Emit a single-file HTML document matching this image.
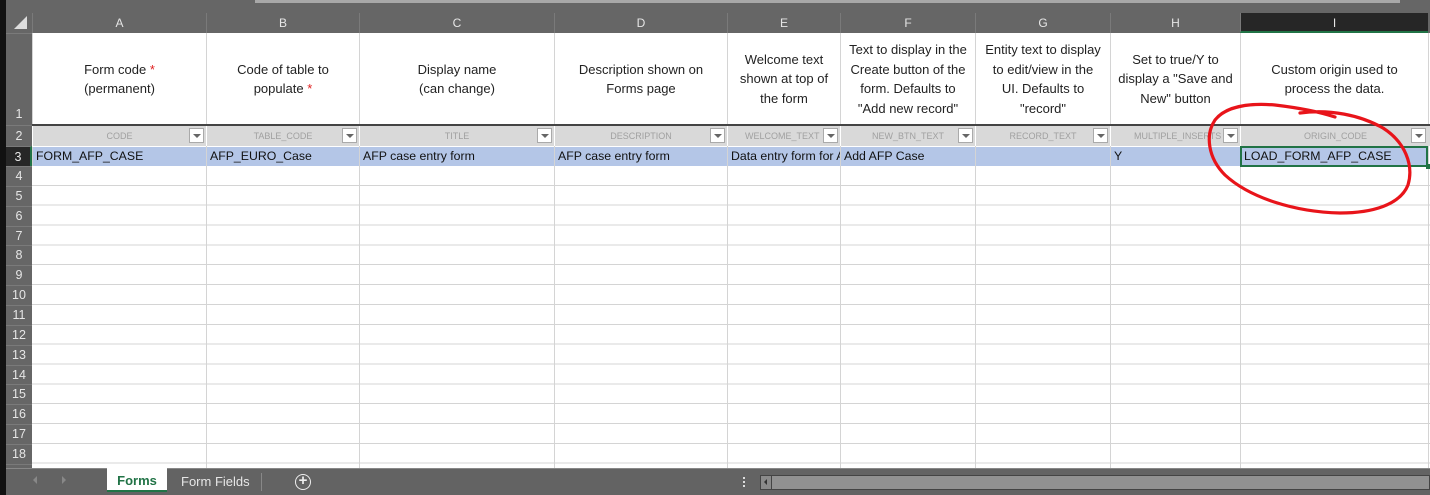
<!DOCTYPE html>
<html><head><meta charset="utf-8"><style>
*{margin:0;padding:0;box-sizing:border-box}
body{width:1430px;height:495px;overflow:hidden;background:#fff;position:relative;font-family:"Liberation Sans",Calibri,sans-serif}
.a{position:absolute}
.ch{position:absolute;top:13px;height:20px;color:#e6e6e6;font-size:12px;text-align:center;line-height:20px;border-left:1px solid #7a7a7a}
.h1{position:absolute;top:33px;height:92px;display:flex;align-items:center;justify-content:center;text-align:center;font-size:13px;line-height:19.5px;color:#222;border-left:1px solid #d4d4d4}
.h2{position:absolute;top:126px;height:20px;background:#d9d9d9;color:#a0a0a0;font-size:9px;line-height:20px;text-align:center;border-left:1px solid #fff}
.dd{position:absolute;top:2px;right:2px;width:15px;height:15px;background:#fff;border:1px solid #aaa}
.dd:after{content:"";position:absolute;left:3px;top:5px;border-left:4px solid transparent;border-right:4px solid transparent;border-top:4px solid #666}
.r3{position:absolute;top:147px;height:19px;background:#b4c6e7;font-size:12.3px;line-height:19px;padding-left:3px;white-space:nowrap;overflow:hidden;color:#111;border-left:1px solid #d4d4d4}
.rn{position:absolute;left:6px;width:26px;color:#e6e6e6;font-size:12.5px;text-align:center;border-top:1px solid #7a7a7a}
.vl{position:absolute;top:33px;height:435px;width:1px;background:#d4d4d4}
.red{color:#e02020}
</style></head><body>
<div class="a" style="left:0;top:0;width:6px;height:495px;background:#111"></div>
<div class="a" style="left:6px;top:0;width:1424px;height:33px;background:#666"></div>
<div class="a" style="left:255px;top:0;width:1145px;height:3px;background:#a8a8a8"></div>
<div class="a" style="left:6px;top:33px;width:26px;height:435px;background:#666"></div>
<div class="a" style="left:14px;top:16px;width:0;height:0;border-left:13px solid transparent;border-bottom:13px solid #ddd"></div>
<div class="ch" style="left:32px;width:174px">A</div>
<div class="ch" style="left:206px;width:153px">B</div>
<div class="ch" style="left:359px;width:195px">C</div>
<div class="ch" style="left:554px;width:173px">D</div>
<div class="ch" style="left:727px;width:113px">E</div>
<div class="ch" style="left:840px;width:135px">F</div>
<div class="ch" style="left:975px;width:135px">G</div>
<div class="ch" style="left:1110px;width:130px">H</div>
<div class="ch" style="left:1240px;width:188px;background:#262626;border-bottom:2px solid #217346">I</div>
<div class="a" style="left:32px;top:166px;width:1398px;height:300px;background:repeating-linear-gradient(to bottom,transparent 0,transparent 18.85px,#d4d4d4 18.85px,#d4d4d4 19.85px)"></div>
<div class="vl" style="left:206px"></div><div class="vl" style="left:359px"></div><div class="vl" style="left:554px"></div><div class="vl" style="left:727px"></div><div class="vl" style="left:840px"></div><div class="vl" style="left:975px"></div><div class="vl" style="left:1110px"></div><div class="vl" style="left:1240px"></div><div class="vl" style="left:1428px"></div>
<div class="h1" style="left:32px;width:174px"><div>Form code <span class="red">*</span><br>(permanent)</div></div>
<div class="h1" style="left:206px;width:153px"><div>Code of table to<br>populate <span class="red">*</span></div></div>
<div class="h1" style="left:359px;width:195px"><div>Display name<br>(can change)</div></div>
<div class="h1" style="left:554px;width:173px"><div>Description shown on<br>Forms page</div></div>
<div class="h1" style="left:727px;width:113px"><div>Welcome text<br>shown at top of<br>the form</div></div>
<div class="h1" style="left:840px;width:135px"><div>Text to display in the<br>Create button of the<br>form. Defaults to<br>"Add new record"</div></div>
<div class="h1" style="left:975px;width:135px"><div>Entity text to display<br>to edit/view in the<br>UI. Defaults to<br>"record"</div></div>
<div class="h1" style="left:1110px;width:130px"><div>Set to true/Y to<br>display a "Save and<br>New" button</div></div>
<div class="h1" style="left:1240px;width:188px"><div>Custom origin used to<br>process the data.</div></div>
<div class="a" style="left:32px;top:124px;width:1398px;height:2px;background:#444"></div>
<div class="h2" style="left:32px;width:174px">CODE<div class="dd"></div></div>
<div class="h2" style="left:206px;width:153px">TABLE_CODE<div class="dd"></div></div>
<div class="h2" style="left:359px;width:195px">TITLE<div class="dd"></div></div>
<div class="h2" style="left:554px;width:173px">DESCRIPTION<div class="dd"></div></div>
<div class="h2" style="left:727px;width:113px;text-align:left;padding-left:17px">WELCOME_TEXT<div class="dd"></div></div>
<div class="h2" style="left:840px;width:135px">NEW_BTN_TEXT<div class="dd"></div></div>
<div class="h2" style="left:975px;width:135px">RECORD_TEXT<div class="dd"></div></div>
<div class="h2" style="left:1110px;width:130px;text-align:left;padding-left:23px;overflow:hidden">MULTIPLE_INSERTS<div class="dd"></div></div>
<div class="h2" style="left:1240px;width:190px">ORIGIN_CODE<div class="dd" style="right:4px"></div></div>
<div class="r3" style="left:32px;width:174px">FORM_AFP_CASE</div>
<div class="r3" style="left:206px;width:153px">AFP_EURO_Case</div>
<div class="r3" style="left:359px;width:195px">AFP case entry form</div>
<div class="r3" style="left:554px;width:173px">AFP case entry form</div>
<div class="r3" style="left:727px;width:113px">Data entry form for AFP</div>
<div class="r3" style="left:840px;width:135px">Add AFP Case</div>
<div class="r3" style="left:975px;width:135px"></div>
<div class="r3" style="left:1110px;width:130px">Y</div>
<div class="r3" style="left:1240px;width:188px;border:2px solid #217346;top:146px;height:21px;line-height:17px;padding-left:2px">LOAD_FORM_AFP_CASE</div>
<div class="a" style="left:1426px;top:164px;width:5px;height:5px;background:#217346"></div>
<div class="rn" style="top:33px;height:92px;line-height:160px">1</div>
<div class="rn" style="top:125px;height:21px;line-height:21px">2</div>
<div class="rn" style="top:146px;height:20px;line-height:20px;background:#262626;border-right:2px solid #217346">3</div>
<div class="rn" style="top:166px;height:19.85px;line-height:19px">4</div>
<div class="rn" style="top:185.85px;height:19.85px;line-height:19px">5</div>
<div class="rn" style="top:205.7px;height:19.85px;line-height:19px">6</div>
<div class="rn" style="top:225.55px;height:19.85px;line-height:19px">7</div>
<div class="rn" style="top:245.4px;height:19.85px;line-height:19px">8</div>
<div class="rn" style="top:265.25px;height:19.85px;line-height:19px">9</div>
<div class="rn" style="top:285.1px;height:19.85px;line-height:19px">10</div>
<div class="rn" style="top:304.95px;height:19.85px;line-height:19px">11</div>
<div class="rn" style="top:324.8px;height:19.85px;line-height:19px">12</div>
<div class="rn" style="top:344.65px;height:19.85px;line-height:19px">13</div>
<div class="rn" style="top:364.5px;height:19.85px;line-height:19px">14</div>
<div class="rn" style="top:384.35px;height:19.85px;line-height:19px">15</div>
<div class="rn" style="top:404.2px;height:19.85px;line-height:19px">16</div>
<div class="rn" style="top:424.05px;height:19.85px;line-height:19px">17</div>
<div class="rn" style="top:443.9px;height:19.85px;line-height:19px">18</div>
<div class="rn" style="top:463.75px;height:5px"></div>
<div class="a" style="left:6px;top:468px;width:1424px;height:27px;background:#636363;border-top:1px solid #888"></div>
<div class="a" style="left:33px;top:476px;width:0;height:0;border-top:4px solid transparent;border-bottom:4px solid transparent;border-right:4px solid #888"></div>
<div class="a" style="left:62px;top:476px;width:0;height:0;border-top:4px solid transparent;border-bottom:4px solid transparent;border-left:4px solid #888"></div>
<div class="a" style="left:107px;top:468px;width:60px;height:24px;background:#fff;border-bottom:2px solid #217346;color:#217346;font-weight:bold;font-size:13px;text-align:center;line-height:26px">Forms</div>
<div class="a" style="left:181px;top:468px;color:#e6e6e6;font-size:13px;line-height:27px">Form Fields</div>
<div class="a" style="left:261px;top:473px;width:1px;height:18px;background:#888"></div>
<div class="a" style="left:295px;top:474px;width:16px;height:16px;border:1.5px solid #eee;border-radius:50%;color:#eee;font-size:15px;line-height:12px;text-align:center;font-weight:bold">+</div>
<div class="a" style="left:743px;top:477px;width:2px;height:10px;border-left:2px dotted #ddd"></div>
<div class="a" style="left:760px;top:475px;width:670px;height:15px;background:#919191;border:1px solid #444"></div>
<div class="a" style="left:760px;top:475px;width:12px;height:15px;background:#8a8a8a;border:1px solid #444"></div>
<div class="a" style="left:764px;top:479px;width:0;height:0;border-top:3px solid transparent;border-bottom:3px solid transparent;border-right:3px solid #333"></div>
<svg class="a" style="left:0;top:0" width="1430" height="495">
<path d="M1300,113 C1330,109 1360,115 1383,128 C1405,142 1414,165 1408,185 C1400,205 1372,213 1340,213 C1295,212 1250,198 1225,175 C1208,158 1205,135 1215,120 C1226,106 1250,103 1275,105 C1300,108 1320,112 1335,117" fill="none" stroke="#e8141a" stroke-width="3.2" stroke-linecap="round"/>
</svg>
</body></html>
